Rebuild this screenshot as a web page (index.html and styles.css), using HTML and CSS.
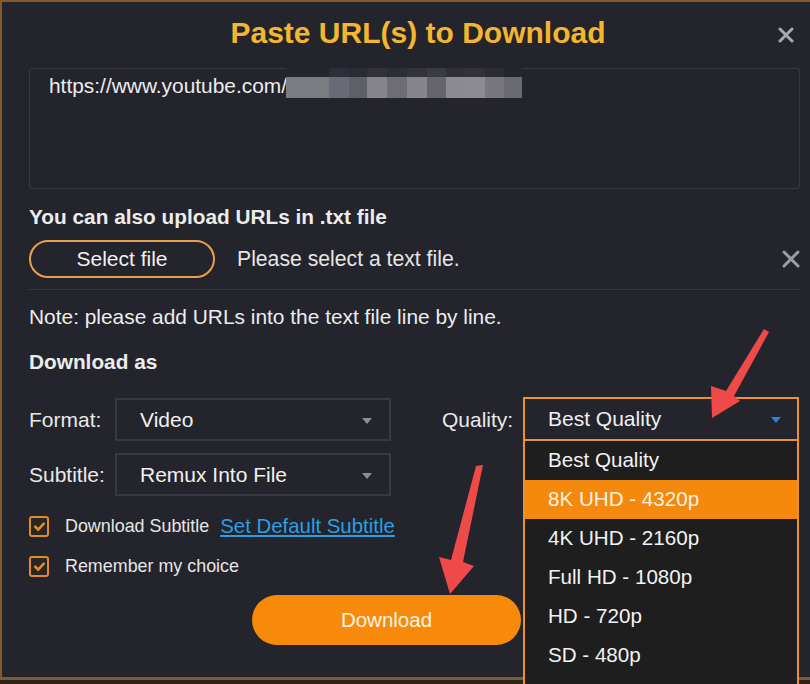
FILE: index.html
```html
<!DOCTYPE html>
<html>
<head>
<meta charset="utf-8">
<title>Paste URL(s) to Download</title>
<link rel="stylesheet" href="styles.css">
</head>
<body>
<div class="dialog">
  <div class="header">
    <h1 class="title">Paste URL(s) to Download</h1>
    <svg class="close" width="16" height="16" viewBox="0 0 16 16"><path d="M2 2L14 14M14 2L2 14" stroke="#a9a9b1" stroke-width="3" stroke-linecap="round"/></svg>
  </div>

  <div class="urlbox">
    <span class="url">https://www.youtube.com/</span>
    <div class="redact">
      <div class="rrow top">
        <span style="width:43px;background:#25252e"></span><span style="width:20px;background:#2e2e38"></span><span style="width:18px;background:#2b2b34"></span><span style="width:20px;background:#31313a"></span><span style="width:20px;background:#2d2d36"></span><span style="width:20px;background:#33333c"></span><span style="width:19px;background:#3a3a44"></span><span style="width:19px;background:#2f2f38"></span><span style="width:20px;background:#31313b"></span><span style="width:19px;background:#2b2b34"></span><span style="width:18px;background:#25252e"></span>
      </div>
      <div class="rrow bottom">
        <span style="width:43px;background:#7b7b82"></span><span style="width:20px;background:#686b75"></span><span style="width:18px;background:#5f5f67"></span><span style="width:20px;background:#84848a"></span><span style="width:20px;background:#6d6d74"></span><span style="width:20px;background:#85858b"></span><span style="width:19px;background:#64646b"></span><span style="width:19px;background:#8a8a90"></span><span style="width:20px;background:#8b8b91"></span><span style="width:19px;background:#77777d"></span><span style="width:18px;background:#6a6a71"></span>
      </div>
    </div>
  </div>

  <div class="subhead">You can also upload URLs in .txt file</div>

  <div class="filerow">
    <button class="selectbtn">Select file</button>
    <span class="filehint">Please select a text file.</span>
    <svg class="clear" width="18" height="18" viewBox="0 0 18 18"><path d="M2 2L16 16M16 2L2 16" stroke="#9c9ca4" stroke-width="3" stroke-linecap="round"/></svg>
  </div>

  <div class="sep"></div>

  <div class="note">Note: please add URLs into the text file line by line.</div>

  <div class="subhead dl">Download as</div>

  <div class="formrow first">
    <span class="label">Format:</span>
    <div class="select">
      <span>Video</span>
      <span class="caret gray"></span>
    </div>
    <div class="quality">
      <span class="label qlabel">Quality:</span>
      <div class="qwrap">
        <div class="select open">
          <span>Best Quality</span>
          <span class="caret blue"></span>
        </div>
        <ul class="menu">
          <li>Best Quality</li>
          <li class="active">8K UHD - 4320p</li>
          <li>4K UHD - 2160p</li>
          <li>Full HD - 1080p</li>
          <li>HD - 720p</li>
          <li>SD - 480p</li>
        </ul>
      </div>
    </div>
  </div>

  <div class="formrow second">
    <span class="label">Subtitle:</span>
    <div class="select">
      <span>Remux Into File</span>
      <span class="caret gray"></span>
    </div>
  </div>

  <div class="check c1">
    <span class="box"><svg width="13" height="11" viewBox="0 0 13 11"><path d="M1.5 5L5.2 8.7L11.5 1.8" fill="none" stroke="#e08b25" stroke-width="2.6"/></svg></span>
    <span class="clabel">Download Subtitle</span>
    <a class="link">Set Default Subtitle</a>
  </div>

  <div class="check c2">
    <span class="box"><svg width="13" height="11" viewBox="0 0 13 11"><path d="M1.5 5L5.2 8.7L11.5 1.8" fill="none" stroke="#e08b25" stroke-width="2.6"/></svg></span>
    <span class="clabel">Remember my choice</span>
  </div>

  <button class="download">Download</button>
</div>

<svg class="arrows" width="810" height="684" viewBox="0 0 810 684">
  <polygon points="764,329 769,332 734,396 740,401 712,418 711,386 726,391" fill="#ef4a4a"/>
  <polygon points="476,466 483,465 463,562 474,566 450,594 439,557 451,560" fill="#ef4a4a"/>
</svg>
</body>
</html>
```

FILE: styles.css
```css
html, body {
  margin: 0;
  padding: 0;
}
body {
  width: 810px;
  height: 684px;
  overflow: hidden;
  background: #2a2521;
  font-family: "Liberation Sans", Arial, sans-serif;
  color: #ececec;
  position: relative;
}
.dialog {
  width: 810px;
  height: 680px;
  box-sizing: border-box;
  border-top: 2px solid #84592e;
  border-left: 2px solid #84592e;
  border-bottom: 3px solid #84592e;
  background: #24242c;
  padding: 0 10px 0 27px;
  position: relative;
}
.header {
  height: 62px;
  display: flex;
  justify-content: center;
  align-items: center;
}
.title {
  margin: 0 0 0 7px;
  font-size: 30px;
  line-height: 62px;
  font-weight: bold;
  color: #f4b62f;
}
.close {
  position: absolute;
  right: 16px;
  top: 25px;
}
.urlbox {
  margin-top: 4px;
  height: 121px;
  box-sizing: border-box;
  border: 1px solid #393944;
  border-radius: 3px;
  padding: 5px 0 0 19px;
  position: relative;
}
.url {
  font-size: 20.9px;
  line-height: 24px;
  color: #ececec;
}
.redact {
  position: absolute;
  left: 256px;
  top: -1px;
  display: flex;
  flex-direction: column;
}
.rrow {
  display: flex;
}
.rrow span {
  display: block;
}
.rrow.top span { height: 9px; }
.rrow.bottom span { height: 21px; }
.subhead {
  margin-top: 16px;
  font-size: 20.8px;
  line-height: 24px;
  font-weight: bold;
  color: #ececec;
}
.filerow {
  margin-top: 11px;
  height: 38px;
  display: flex;
  align-items: center;
}
.selectbtn {
  width: 186px;
  height: 38px;
  box-sizing: border-box;
  border: 2.5px solid #e9a04c;
  border-radius: 19px;
  background: transparent;
  color: #f0f0f0;
  font-family: "Liberation Sans", Arial, sans-serif;
  font-size: 21px;
  padding: 0;
}
.filehint {
  margin-left: 22px;
  font-size: 21.2px;
  color: #e6e6e6;
}
.clear {
  margin-left: auto;
  margin-right: 0;
}
.sep {
  margin-top: 11px;
  height: 1px;
  background: #393944;
}
.note {
  margin-top: 15px;
  font-size: 20.9px;
  line-height: 24px;
}
.subhead.dl {
  margin-top: 21px;
}
.formrow {
  display: flex;
  align-items: center;
  height: 43px;
}
.formrow.first { margin-top: 24px; }
.formrow.second { margin-top: 12px; }
.label {
  width: 86px;
  font-size: 21px;
  color: #e8e8e8;
}
.select {
  width: 276px;
  height: 43px;
  box-sizing: border-box;
  border: 2px solid #393946;
  display: flex;
  align-items: center;
  padding: 0 0 0 23px;
  font-size: 21px;
  color: #f0f0f0;
  position: relative;
}
.caret {
  position: absolute;
  right: 17px;
  top: 18px;
  width: 0;
  height: 0;
  border-left: 5px solid transparent;
  border-right: 5px solid transparent;
  border-top: 6px solid #8c8ca0;
}
.caret.blue {
  border-top-color: #2a82e6;
  right: 16px;
}
.quality {
  display: flex;
  align-items: center;
  margin-left: 51px;
}
.qlabel {
  width: 81px;
}
.qwrap {
  position: relative;
}
.select.open {
  border-color: #f0922b;
  height: 44px;
  margin-top: -1px;
}
.menu {
  position: absolute;
  left: 0;
  top: 43px;
  width: 276px;
  box-sizing: border-box;
  margin: 0;
  padding: 0 0 30px 0;
  list-style: none;
  background: #1e1e1f;
  border-left: 2px solid #f0922b;
  border-right: 2px solid #f0922b;
  z-index: 2;
}
.menu li {
  height: 39px;
  line-height: 38px;
  padding-left: 23px;
  font-size: 20.6px;
  color: #f2f2f2;
}
.menu li.active {
  background: #f5890d;
  color: #fff3e4;
}
.check {
  display: flex;
  align-items: center;
  height: 21px;
}
.check.c1 { margin-top: 20px; }
.check.c2 { margin-top: 19px; }
.box {
  width: 20px;
  height: 21px;
  box-sizing: border-box;
  border: 2px solid #e08b25;
  border-radius: 3px;
  display: flex;
  align-items: center;
  justify-content: center;
  background: #2a2624;
}
.clabel {
  margin-left: 16px;
  font-size: 17.9px;
  color: #e6e6e6;
}
.link {
  margin-left: 11px;
  font-size: 20.4px;
  color: #2b9fe2;
  text-decoration: underline;
  text-underline-offset: 2px;
}
.download {
  display: block;
  margin: 18px 0 0 223px;
  width: 269px;
  height: 50px;
  border: none;
  border-radius: 25px;
  background: #f78a0b;
  color: #fff4e6;
  font-family: "Liberation Sans", Arial, sans-serif;
  font-size: 20.5px;
  padding: 0;
}
.arrows {
  position: absolute;
  left: 0;
  top: 0;
  pointer-events: none;
  z-index: 5;
}
```
